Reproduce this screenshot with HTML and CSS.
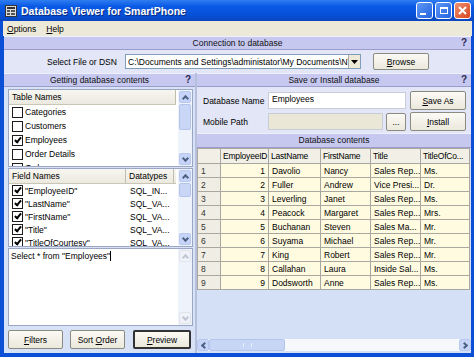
FILE: index.html
```html
<!DOCTYPE html>
<html lang="en">
<head>
    <meta charset="UTF-8">
    <title>Database Viewer for SmartPhone</title>
    <link rel="stylesheet" href="styles.css">
</head>
<body>
<div class="window">

    <!-- Title bar -->
    <div class="titlebar">
        <svg class="app-icon" width="12" height="12" viewBox="0 0 12 12">
            <rect x="0.5" y="0.5" width="11" height="11" fill="#ddd" stroke="#333"/>
            <rect x="2" y="2" width="8" height="2" fill="#333"/>
            <rect x="2" y="5" width="3" height="2" fill="#555"/>
            <rect x="6" y="5" width="4" height="2" fill="#555"/>
            <rect x="2" y="8" width="3" height="2" fill="#555"/>
            <rect x="6" y="8" width="4" height="2" fill="#555"/>
        </svg>
        <span class="title">Database Viewer for SmartPhone</span>
        <div class="caption-buttons">
            <div class="cap-btn"><span class="min-glyph"></span></div>
            <div class="cap-btn"><span class="max-glyph"></span></div>
            <div class="cap-btn close">
                <svg width="9" height="9" viewBox="0 0 9 9"><path d="M1 1 L8 8 M8 1 L1 8" stroke="#fff" stroke-width="2"/></svg>
            </div>
        </div>
    </div>

    <!-- Menu -->
    <div class="menubar">
        <span><u>O</u>ptions</span>
        <span><u>H</u>elp</span>
    </div>

    <div class="client">
        <div class="section-head">Connection to database <b class="help">?</b></div>
        <div class="connect-row">
            <span class="label">Select File or DSN</span>
            <div class="combo">
                <span class="combo-text">C:\Documents and Settings\administator\My Documents\N\</span>
                <span class="combo-arrow">
                    <svg width="7" height="4" viewBox="0 0 7 4"><path d="M0 0 L7 0 L3.5 4 Z" fill="#000"/></svg>
                </span>
            </div>
            <button class="btn browse"><u>B</u>rowse</button>
        </div>

        <div class="panels">
            <!-- Left panel -->
            <div class="panel left">
                <div class="section-head">Getting database contents <b class="help">?</b></div>
                <div class="left-body">
                    <div class="listbox tables">
                        <div class="list-main">
                            <div class="list-head"><span class="col wide">Table Names</span></div>
                            <div class="item"><span class="chk"></span>Categories</div>
                            <div class="item"><span class="chk"></span>Customers</div>
                            <div class="item"><span class="chk on"></span>Employees</div>
                            <div class="item"><span class="chk"></span>Order Details</div>
                            <div class="item"><span class="chk"></span>Orders</div>
                        </div>
                        <div class="vscroll">
                            <span class="arrow up"></span>
                            <span class="thumb"></span>
                            <span class="arrow down"></span>
                        </div>
                    </div>

                    <div class="listbox fields">
                        <div class="list-main">
                            <div class="list-head">
                                <span class="col fname">Field Names</span>
                                <span class="col ftype">Datatypes</span>
                            </div>
                            <div class="item"><span class="chk on"></span><span class="fname">"EmployeeID"</span><span class="ftype">SQL_IN...</span></div>
                            <div class="item"><span class="chk on"></span><span class="fname">"LastName"</span><span class="ftype">SQL_VA...</span></div>
                            <div class="item"><span class="chk on"></span><span class="fname">"FirstName"</span><span class="ftype">SQL_VA...</span></div>
                            <div class="item"><span class="chk on"></span><span class="fname">"Title"</span><span class="ftype">SQL_VA...</span></div>
                            <div class="item"><span class="chk on"></span><span class="fname">"TitleOfCourtesy"</span><span class="ftype">SQL_VA...</span></div>
                        </div>
                        <div class="vscroll">
                            <span class="arrow up"></span>
                            <span class="thumb small"></span>
                            <span class="arrow down"></span>
                        </div>
                    </div>

                    <div class="listbox sql">
                        <div class="sql-text">Select * from "Employees"<span class="caret"></span></div>
                        <div class="vscroll off">
                            <span class="arrow up"></span>
                            <span class="arrow down"></span>
                        </div>
                    </div>

                    <div class="left-buttons">
                        <button class="btn"><u>F</u>ilters</button>
                        <button class="btn">Sort <u>O</u>rder</button>
                        <button class="btn default"><u>P</u>review</button>
                    </div>
                </div>
            </div>

            <!-- Right panel -->
            <div class="panel right">
                <div class="section-head">Save or Install database <b class="help">?</b></div>
                <div class="save-form">
                    <div class="form-row">
                        <span class="label">Database Name</span>
                        <div class="field">Employees</div>
                        <button class="btn side"><u>S</u>ave As</button>
                    </div>
                    <div class="form-row">
                        <span class="label">Mobile Path</span>
                        <div class="field disabled"></div>
                        <button class="btn dots">...</button>
                        <button class="btn side"><u>I</u>nstall</button>
                    </div>
                </div>
                <div class="section-head plain">Database contents</div>
                <div class="grid-area">
                    <table class="grid">
                        <colgroup>
                            <col class="c-row"><col class="c-id"><col class="c-last"><col class="c-first"><col class="c-title"><col>
                        </colgroup>
                        <tr class="hdr">
                            <th class="rowno"></th>
                            <th>EmployeeID</th><th>LastName</th><th>FirstName</th><th>Title</th><th>TitleOfCo...</th>
                        </tr>
                        <tr><th class="rowno">1</th><td class="num">1</td><td>Davolio</td><td>Nancy</td><td>Sales Rep...</td><td>Ms.</td></tr>
                        <tr><th class="rowno">2</th><td class="num">2</td><td>Fuller</td><td>Andrew</td><td>Vice Presi...</td><td>Dr.</td></tr>
                        <tr><th class="rowno">3</th><td class="num">3</td><td>Leverling</td><td>Janet</td><td>Sales Rep...</td><td>Ms.</td></tr>
                        <tr><th class="rowno">4</th><td class="num">4</td><td>Peacock</td><td>Margaret</td><td>Sales Rep...</td><td>Mrs.</td></tr>
                        <tr><th class="rowno">5</th><td class="num">5</td><td>Buchanan</td><td>Steven</td><td>Sales Ma...</td><td>Mr.</td></tr>
                        <tr><th class="rowno">6</th><td class="num">6</td><td>Suyama</td><td>Michael</td><td>Sales Rep...</td><td>Mr.</td></tr>
                        <tr><th class="rowno">7</th><td class="num">7</td><td>King</td><td>Robert</td><td>Sales Rep...</td><td>Mr.</td></tr>
                        <tr><th class="rowno">8</th><td class="num">8</td><td>Callahan</td><td>Laura</td><td>Inside Sal...</td><td>Ms.</td></tr>
                        <tr><th class="rowno">9</th><td class="num">9</td><td>Dodsworth</td><td>Anne</td><td>Sales Rep...</td><td>Ms.</td></tr>
                    </table>
                    <div class="grid-empty"></div>
                    <div class="hscroll">
                        <span class="arrow left"></span>
                        <span class="hthumb"><span class="grip"></span></span>
                        <span class="htrack"></span>
                        <span class="arrow right"></span>
                    </div>
                </div>
            </div>
        </div>
    </div>
</div>
</body>
</html>
```

FILE: styles.css
```css
body {
    margin: 0;
    font-family: 'Liberation Sans', Arial, sans-serif;
    font-size: 8.5px;
    color: #000;
    background: #fff;
}
.window {
    width: 474px;
    height: 357px;
    box-sizing: border-box;
    background: #0b4fd6;
    padding: 0 3px 4px 4px;
    display: flex;
    flex-direction: column;
}
.titlebar {
    height: 21px;
    flex-shrink: 0;
    margin: 0 -3px 0 -4px;
    padding: 0 3px 0 5px;
    background: linear-gradient(#2f7df0, #0a5ae6 30%, #0650d8 70%, #0a46bd);
    display: flex;
    align-items: center;
    color: #fff;
}
.app-icon {
    margin-right: 4px;
}
.title {
    font-size: 10.5px;
    font-weight: bold;
    text-shadow: 1px 1px 0 #0b2d80;
}
.caption-buttons {
    margin-left: auto;
    display: flex;
    gap: 2px;
}
.cap-btn {
    width: 17px;
    height: 17px;
    box-sizing: border-box;
    border: 1px solid #fff;
    border-radius: 3px;
    background: linear-gradient(135deg, #5d97f5, #2464e0);
    display: flex;
    align-items: center;
    justify-content: center;
}
.cap-btn.close {
    background: linear-gradient(135deg, #f09070, #d8461e);
}
.min-glyph {
    width: 6px;
    height: 2px;
    background: #fff;
    margin-top: 7px;
    margin-right: 3px;
}
.max-glyph {
    width: 8px;
    height: 7px;
    box-sizing: border-box;
    border: 1px solid #fff;
    border-top-width: 2px;
}
.menubar {
    height: 15px;
    flex-shrink: 0;
    background: #ece9d8;
    display: flex;
    align-items: center;
    gap: 10px;
    padding-left: 4px;
    margin: 0 -1px 0 -1px;
}
.client {
    flex: 1;
    background: #d8e2f6;
    display: flex;
    flex-direction: column;
    min-height: 0;
}
.section-head {
    height: 14px;
    flex-shrink: 0;
    background: #c6c8f0;
    border-top: 1px solid #eef0ff;
    border-bottom: 1px solid #9a9ccc;
    box-sizing: border-box;
    position: relative;
    text-align: center;
    line-height: 12px;
    color: #111;
}
.section-head .help {
    position: absolute;
    right: 4px;
    top: 0;
    font-size: 10px;
    color: #2a2a55;
}
.connect-row {
    height: 23px;
    flex-shrink: 0;
    background: #e2e6f6;
    display: flex;
    align-items: center;
    padding-left: 43px;
}
.connect-row .label {
    width: 78px;
    white-space: nowrap;
}
.combo {
    width: 236px;
    height: 15px;
    box-sizing: border-box;
    border: 1px solid #7f9db9;
    background: #fff;
    display: flex;
    align-items: center;
    overflow: hidden;
}
.combo-text {
    flex: 1;
    white-space: nowrap;
    overflow: hidden;
    padding-left: 2px;
}
.combo-arrow {
    width: 11px;
    height: 13px;
    flex-shrink: 0;
    background: #ece9d8;
    border-left: 1px solid #aaa;
    display: flex;
    align-items: center;
    justify-content: center;
}
.btn {
    font-family: inherit;
    font-size: 8.5px;
    color: #000;
    height: 17px;
    padding: 0;
    border: 1px solid #8a8a80;
    border-radius: 2px;
    background: linear-gradient(#fbfaf4, #ebe8dc);
}
.btn.browse {
    width: 56px;
    margin-left: 12px;
}
.btn.default {
    border: 2px solid #333;
}
.panels {
    flex: 1;
    display: flex;
    gap: 2px;
    min-height: 0;
    background: #b6c0dc;
}
.panel {
    display: flex;
    flex-direction: column;
    background: #d8e2f6;
    min-height: 0;
}
.panel.left {
    width: 191px;
}
.panel.right {
    flex: 1;
}
.left-body {
    flex: 1;
    display: flex;
    flex-direction: column;
    padding: 2px 2px 0 4px;
    gap: 1px;
}
.listbox {
    display: flex;
    box-sizing: border-box;
    background: #fff;
    border: 1px solid #9aa6c4;
    flex-shrink: 0;
}
.listbox.tables {
    height: 78px;
}
.listbox.fields {
    height: 79px;
}
.listbox.sql {
    height: 78px;
}
.list-main {
    flex: 1;
    overflow: hidden;
    margin-right: 2px;
}
.list-head {
    height: 14px;
    display: flex;
    background: linear-gradient(#f7f6f0, #ebe9df);
    border-bottom: 1px solid #c9c6b6;
}
.list-head .col {
    border-right: 1px solid #c0bdad;
    padding-left: 3px;
    line-height: 14px;
}
.list-head .col.wide {
    width: 163px;
}
.col.fname {
    width: 113px;
}
.col.ftype {
    width: 44px;
}
.item {
    height: 13px;
    display: flex;
    align-items: center;
    padding-left: 3px;
    white-space: nowrap;
}
.listbox.tables .item {
    height: 14px;
}
.item .fname {
    width: 104px;
}
.item .ftype {
    padding-left: 1px;
}
.chk {
    width: 9px;
    height: 9px;
    border: 1px solid #1c1c1c;
    background: #fff;
    margin-right: 2px;
    flex-shrink: 0;
    position: relative;
}
.chk.on::after {
    content: "";
    position: absolute;
    left: 3px;
    top: 0;
    width: 2px;
    height: 5px;
    border-right: 2px solid #000;
    border-bottom: 2px solid #000;
    transform: rotate(40deg);
}
.vscroll {
    width: 14px;
    background: #eef2fb;
    display: flex;
    flex-direction: column;
    align-items: center;
    padding: 1px 0;
}
.arrow {
    width: 12px;
    height: 12px;
    flex-shrink: 0;
    box-sizing: border-box;
    border: 1px solid #b8c8f0;
    border-radius: 2px;
    background: #c6d4f7;
    display: flex;
    align-items: center;
    justify-content: center;
}
.arrow::before {
    content: "";
    width: 3px;
    height: 3px;
    border-left: 2px solid #4d6185;
    border-top: 2px solid #4d6185;
}
.arrow.up::before { transform: translateY(1px) rotate(45deg); }
.arrow.down::before { transform: translateY(-1px) rotate(225deg); }
.arrow.left::before { transform: translateX(1px) rotate(-45deg); }
.arrow.right::before { transform: translateX(-1px) rotate(135deg); }
.arrow.down {
    margin-top: auto;
}
.thumb {
    width: 12px;
    height: 26px;
    margin-top: 1px;
    border-radius: 2px;
    background: #c9d6f6;
    border: 1px solid #b4c4ec;
    box-sizing: border-box;
}
.thumb.small {
    height: 14px;
}
.vscroll.off .arrow {
    background: #f0f2f8;
    border-color: #e0e4ee;
}
.vscroll.off .arrow::before {
    border-color: #c0c6d4;
}
.sql-text {
    flex: 1;
    padding: 2px;
}
.caret {
    display: inline-block;
    width: 1px;
    height: 10px;
    background: #000;
    vertical-align: -2px;
}
.left-buttons {
    display: flex;
    gap: 7px;
    padding: 3px 1px 0 0;
}
.left-buttons .btn {
    width: 55px;
    height: 19px;
}
.left-buttons .btn.default {
    width: 58px;
    margin-left: 1px;
}
.save-form {
    background: #e2e6f6;
    padding: 4px 4px 2px 6px;
    display: flex;
    flex-direction: column;
    gap: 2px;
}
.form-row {
    display: flex;
    align-items: center;
    height: 19px;
}
.form-row .label {
    width: 65px;
    white-space: nowrap;
}
.field {
    width: 138px;
    height: 17px;
    box-sizing: border-box;
    background: #fff;
    border: 1px solid #c8ccd8;
    padding: 1px 3px;
}
.field.disabled {
    width: 115px;
    background: #ebe7d6;
}
.btn.side {
    width: 56px;
    height: 19px;
    margin-left: 4px;
}
.btn.dots {
    width: 20px;
    height: 18px;
    margin-left: 3px;
}
.section-head.plain {
    height: 15px;
}
.grid-area {
    flex: 1;
    display: flex;
    flex-direction: column;
    background: #d4e0f6;
    min-height: 0;
}
.grid {
    border-collapse: collapse;
    table-layout: fixed;
    width: 273px;
}
.grid col.c-row { width: 23px; }
.grid col.c-id { width: 48px; }
.grid col.c-last { width: 52px; }
.grid col.c-first { width: 50px; }
.grid col.c-title { width: 50px; }
.grid th, .grid td {
    height: 13px;
    padding: 0 0 0 3px;
    border: 1px solid #a9a8a0;
    font-weight: normal;
    text-align: left;
    white-space: nowrap;
    overflow: hidden;
    background: #fffbe0;
    line-height: 12px;
}
.grid tr.hdr th {
    height: 14px;
    padding-left: 2px;
    letter-spacing: -0.2px;
    background: #f1efe6;
}
.grid th.rowno {
    background: #efede4;
    color: #333;
}
.grid td.num {
    text-align: right;
    padding: 0 3px 0 0;
}
.grid-empty {
    flex: 1;
}
.hscroll {
    height: 12px;
    flex-shrink: 0;
    display: flex;
    background: #f6f8fc;
    margin-bottom: 2px;
}
.hthumb {
    width: 76px;
    background: #c8d6f6;
    border: 1px solid #b4c4ec;
    border-radius: 2px;
    box-sizing: border-box;
    display: flex;
    align-items: center;
    justify-content: center;
}
.grip {
    width: 7px;
    height: 4px;
    border-left: 1px solid #eef;
    border-right: 1px solid #eef;
}
.htrack {
    flex: 1;
}
```
